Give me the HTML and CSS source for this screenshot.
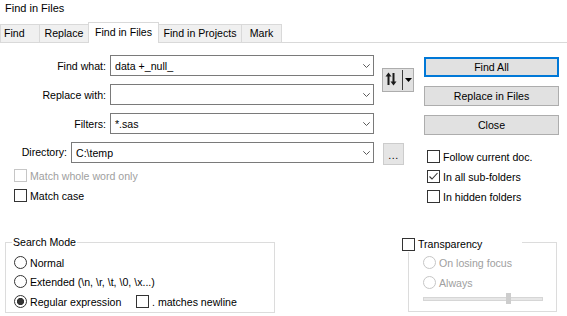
FILE: index.html
```html
<!DOCTYPE html>
<html>
<head>
<meta charset="utf-8">
<title>Find in Files</title>
<link rel="stylesheet" href="styles.css">
</head>
<body>
<div class="dialog">
  <div class="title">Find in Files</div>
  <div class="tabs">
    <div class="tab t-find">Find</div>
    <div class="tab t-replace">Replace</div>
    <div class="tab t-files active">Find in Files</div>
    <div class="tab t-projects">Find in Projects</div>
    <div class="tab t-mark">Mark</div>
    <div class="tab-fill"></div>
  </div>

  <div class="panel">
    <div class="left">
      <div class="fields">
        <label class="lbl">Find what:</label>
        <div class="combo"><span class="val">data +_null_</span><svg class="chev" width="7" height="4" viewBox="0 0 7 4"><polyline points="0.3,0.3 3.5,3.5 6.7,0.3" fill="none" stroke="#5a5a5a" stroke-width="1"/></svg></div>
        <button class="swap" type="button"><svg width="30" height="22" viewBox="0 0 30 22">
          <line x1="5.5" y1="6.5" x2="5.5" y2="16" stroke="#1a1a1a" stroke-width="2"/>
          <polygon points="2.5,7.5 5.5,3.5 8.5,7.5" fill="#1a1a1a"/>
          <line x1="10.5" y1="4" x2="10.5" y2="13.5" stroke="#1a1a1a" stroke-width="2"/>
          <polygon points="7.5,12.5 10.5,16.5 13.5,12.5" fill="#1a1a1a"/>
          <line x1="19.5" y1="1" x2="19.5" y2="21" stroke="#3c3c3c" stroke-width="1"/>
          <polygon points="22,9 29,9 25.5,13" fill="#000"/>
        </svg></button>

        <label class="lbl">Replace with:</label>
        <div class="combo"><span class="val"></span><svg class="chev" width="7" height="4" viewBox="0 0 7 4"><polyline points="0.3,0.3 3.5,3.5 6.7,0.3" fill="none" stroke="#5a5a5a" stroke-width="1"/></svg></div>

        <label class="lbl">Filters:</label>
        <div class="combo"><span class="val">*.sas</span><svg class="chev" width="7" height="4" viewBox="0 0 7 4"><polyline points="0.3,0.3 3.5,3.5 6.7,0.3" fill="none" stroke="#5a5a5a" stroke-width="1"/></svg></div>
      </div>

      <div class="dir-row">
        <label class="lbl dir-lbl">Directory:</label>
        <div class="combo dir-combo"><span class="val">C:\temp</span><svg class="chev" width="7" height="4" viewBox="0 0 7 4"><polyline points="0.3,0.3 3.5,3.5 6.7,0.3" fill="none" stroke="#5a5a5a" stroke-width="1"/></svg></div>
        <button class="browse" type="button">...</button>
      </div>

      <div class="checks lchecks">
        <div class="opt disabled"><span class="box"></span><span>Match whole word only</span></div>
        <div class="opt"><span class="box"></span><span>Match case</span></div>
      </div>
    </div>

    <div class="right">
      <button class="btn default" type="button">Find All</button>
      <button class="btn" type="button">Replace in Files</button>
      <button class="btn" type="button">Close</button>
      <div class="checks rchecks">
        <div class="opt"><span class="box"></span><span>Follow current doc.</span></div>
        <div class="opt"><span class="box"><svg width="11" height="11" viewBox="0 0 11 11"><polyline points="1.5,5.5 4,8 9.5,2" fill="none" stroke="#333" stroke-width="1.1"/></svg></span><span>In all sub-folders</span></div>
        <div class="opt"><span class="box"></span><span>In hidden folders</span></div>
      </div>
    </div>
  </div>

  <div class="bottom">
    <div class="group search">
      <div class="group-title">Search Mode</div>
      <div class="opt"><span class="radio"></span><span>Normal</span></div>
      <div class="opt"><span class="radio"></span><span>Extended (\n, \r, \t, \0, \x...)</span></div>
      <div class="opt"><span class="radio on"></span><span class="regex-lbl">Regular expression</span><span class="box"></span><span>. matches newline</span></div>
    </div>
    <div class="group transp">
      <div class="group-title trans-title"><span class="box"></span><span>Transparency</span></div>
      <div class="opt disabled"><span class="radio"></span><span>On losing focus</span></div>
      <div class="opt disabled"><span class="radio"></span><span>Always</span></div>
      <div class="slider"><div class="track"></div><div class="thumb"></div></div>
    </div>
  </div>
</div>
</body>
</html>
```

FILE: styles.css
```css
* { box-sizing: border-box; }
html, body { margin: 0; padding: 0; background: #fff; }
body {
  font-family: "Liberation Sans", Arial, sans-serif;
  font-size: 10.6px;
  color: #000;
  width: 567px;
  height: 316px;
  overflow: hidden;
}
button { font: inherit; color: inherit; margin: 0; padding: 0; }

.title { height: 16px; line-height: 16px; padding-left: 5px; font-size: 11px; }

/* tabs */
.tabs { display: flex; align-items: flex-end; height: 21px; margin-top: 6px; }
.tab {
  height: 19px; line-height: 17px;
  border: 1px solid #d9d9d9; border-left: 0;
  background: #f0f0f0; text-align: center; white-space: nowrap;
}
.t-find { width: 40px; border-left: 1px solid #d9d9d9; text-align: left; padding-left: 3px; }
.t-replace { width: 49px; }
.t-files { width: 71px; margin-left: -1px; border-left: 1px solid #d9d9d9; }
.t-projects { width: 83px; }
.t-mark { width: 40px; }
.tab.active { height: 21px; line-height: 19px; background: #fff; border-bottom: 0; }
.tab-fill { flex: 1; height: 1px; border-bottom: 1px solid #d9d9d9; }

/* main panel */
.panel { display: flex; height: 199px; padding-top: 12px; }
.left { width: 414px; }
.fields {
  display: grid;
  grid-template-columns: 110px 264px 40px;
  grid-template-rows: 21px 21px 21px;
  row-gap: 8px;
  align-items: center;
}
.lbl { text-align: right; padding-right: 4px; white-space: nowrap; }
.combo {
  height: 21px; border: 1px solid #7a7a7a; background: #fff;
  display: flex; align-items: center; padding: 0 3px 0 4px;
}
.combo .val { flex: 1; white-space: pre; }
.chev { flex: none; display: block; }

.swap {
  grid-column: 3; grid-row: 1 / span 2; justify-self: end;
  width: 32px; height: 24px;
  background: #e1e1e1; border: 1px solid #adadad;
  display: block;
}
.swap svg { display: block; }

.dir-row { display: flex; align-items: flex-start; margin-top: 8px; }
.dir-lbl { width: 71px; line-height: 21px; }
.dir-combo { width: 303px; }
.browse {
  width: 21px; height: 22px; margin-left: 9px; margin-top: 1px;
  background: #e5e5e5; border: 1px solid #cccccc;
  line-height: 22px; text-align: center; letter-spacing: 0.5px;
}

/* checkboxes / radios */
.opt { display: flex; align-items: center; height: 13px; white-space: nowrap; }
.box {
  flex: none; width: 13px; height: 13px; border: 1px solid #333; background: #fff;
  margin-right: 3px; display: inline-flex; align-items: center; justify-content: center;
}
.box svg { display: block; }
.radio {
  flex: none; width: 13px; height: 13px; border: 1px solid #333; border-radius: 50%;
  background: #fff; margin-right: 3px;
}
.radio.on { background: radial-gradient(circle, #333 0 3.3px, #fff 3.9px); }
.disabled { color: #a0a0a0; }
.disabled .box, .disabled .radio { border-color: #c6c6c6; }

.lchecks { padding-left: 14px; margin-top: 4px; }
.lchecks .opt + .opt { margin-top: 7px; }

.right { width: 135px; margin-left: 10px; padding-top: 2px; }
.btn {
  display: block; width: 135px; height: 20px;
  background: #e1e1e1; border: 1px solid #adadad; text-align: center;
}
.btn + .btn { margin-top: 9px; }
.btn.default { border: 2px solid #0078d7; }
.rchecks { padding-left: 3px; margin-top: 15px; }
.rchecks .opt + .opt { margin-top: 7px; }

/* bottom groups */
.bottom { display: flex; padding-left: 5px; }
.group { position: relative; border: 1px solid #dcdcdc; }
.group-title { position: absolute; background: #fff; white-space: nowrap; }
.search { width: 270px; height: 71px; padding: 13px 0 0 8px; }
.search .group-title { top: -8px; left: 6px; padding: 0 1px; line-height: 14px; }
.search .opt + .opt { margin-top: 6px; }
.search .opt + .opt + .opt { margin-top: 7px; }
.regex-lbl { width: 106px; }

.transp { margin-left: 133px; width: 149px; height: 70px; padding: 13px 0 0 14px; }
.trans-title {
  top: -7px; left: -10px; width: 123px; height: 16px;
  display: flex; align-items: center; padding-left: 3px;
}
.transp .opt + .opt { margin-top: 7px; }
.slider { position: relative; width: 120px; height: 11px; margin-top: 4px; display: flex; align-items: center; }
.track { width: 100%; height: 4px; background: #e7e7e7; border: 1px solid #d6d6d6; }
.thumb { position: absolute; left: 83px; top: 0; width: 5px; height: 11px; background: #cdcdcd; }
```
